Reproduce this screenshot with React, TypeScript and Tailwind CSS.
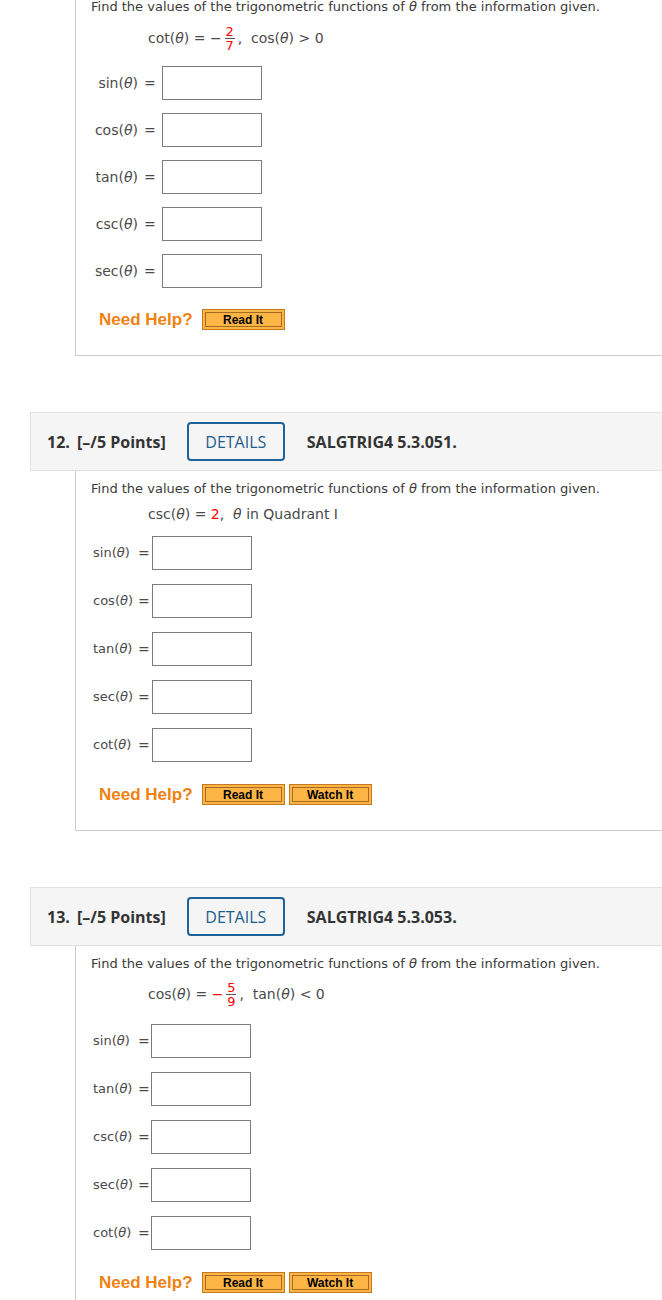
import React from 'react';

const mathFont = "font-['DejaVu_Sans',Verdana,sans-serif]";

function Theta() {
  return <i className="italic">θ</i>;
}

function Frac({ num, den }: { num: string; den: string }) {
  return (
    <span className="inline-flex flex-col items-center align-middle mx-[3px] text-[13px] leading-[11px] text-[#ff0000]">
      <span>{num}</span>
      <span className="w-[10px] h-px bg-[#555] my-[1px]" />
      <span>{den}</span>
    </span>
  );
}

function HelpButton({ label }: { label: string }) {
  return (
    <div className="w-[83px] h-[21px] border border-[#c57a22] bg-[#fdb546] p-[2px]">
      <div className="h-full border border-[#a86a20] flex items-center justify-center font-['Liberation_Sans',Arial,sans-serif] font-bold text-[12px] text-black">
        {label}
      </div>
    </div>
  );
}

function NeedHelp({ watch }: { watch?: boolean }) {
  return (
    <div className="flex items-center h-[21px] pl-[8px]">
      <span className="font-['Liberation_Sans',Arial,sans-serif] font-bold text-[17px] text-[#ef8210] mr-[9px]">
        Need Help?
      </span>
      <HelpButton label="Read It" />
      {watch && (
        <div className="ml-[4px]">
          <HelpButton label="Watch It" />
        </div>
      )}
    </div>
  );
}

function AnswerRow({
  fn,
  variant,
}: {
  fn: string;
  variant: 'right' | 'left' | 'left2';
}) {
  if (variant === 'right') {
    return (
      <div className={`flex items-center h-[34px] ${mathFont} text-[14px] text-[#4a4a4a]`}>
        <span className="w-[47px] text-right">
          {fn}(<Theta />)
        </span>
        <span className="ml-[6px]">=</span>
        <div className="ml-[6px] w-[100px] h-[34px] border border-[#7b7b7b]" />
      </div>
    );
  }
  // left-aligned labels, "=" in a fixed column
  const cols = variant === 'left' ? 'grid-cols-[47px_14px_100px]' : 'grid-cols-[47px_13px_100px]';
  return (
    <div className={`grid ${cols} items-center h-[34px] ${mathFont} text-[13px] text-[#4a4a4a]`}>
      <span className="pl-[2px] whitespace-nowrap">
        {fn}(<Theta />)
      </span>
      <span className="text-[14px]">=</span>
      <div className="w-[100px] h-[34px] border border-[#7b7b7b]" />
    </div>
  );
}

function FindText() {
  return (
    <p className={`${mathFont} text-[13px] leading-[13px] h-[13px] text-[#3a3a3a] whitespace-nowrap`}>
      Find the values of the trigonometric functions of <Theta /> from the information given.
    </p>
  );
}

function Header({ num, code }: { num: number; code: string }) {
  return (
    <div className="ml-[30px] h-[59px] border-t border-b border-l border-[#e1e1e1] bg-[#f5f5f5] flex items-center pl-[16px] font-['Open_Sans',sans-serif] text-[#333]">
      <span className="font-bold text-[16px] whitespace-nowrap">
        {num}. <span className="ml-[3px]">[–/5 Points]</span>
      </span>
      <div className="ml-[21px] w-[98px] h-[39px] border-2 border-[#1e6297] rounded-[4px] flex items-center justify-center text-[16px] text-[#1d5c8c]">
        DETAILS
      </div>
      <span className="ml-[22px] font-bold text-[16px]">{code}</span>
    </div>
  );
}

export default function App() {
  const fns1 = ['sin', 'cos', 'tan', 'csc', 'sec'];
  const fns12 = ['sin', 'cos', 'tan', 'sec', 'cot'];
  const fns13 = ['sin', 'tan', 'csc', 'sec', 'cot'];

  return (
    <div className="w-[662px] bg-white overflow-hidden pb-[6px]">
      {/* question 11 (cut off at the top) */}
      <div className="ml-[75px] border-l border-b border-[#cccccc] pl-[15px] pb-[25px]">
        <FindText />
        <div className={`mt-[13px] h-[24px] flex items-center pl-[57px] ${mathFont} text-[14px] text-[#4a4a4a] whitespace-nowrap`}>
          cot(<Theta />)&nbsp;=&nbsp;−<Frac num="2" den="7" />,&nbsp;&nbsp;cos(<Theta />)&nbsp;&gt;&nbsp;0
        </div>
        <div className="mt-[16px] flex flex-col gap-[13px]">
          {fns1.map((f) => (
            <AnswerRow key={f} fn={f} variant="right" />
          ))}
        </div>
        <div className="mt-[21px]">
          <NeedHelp />
        </div>
      </div>

      {/* question 12 */}
      <div className="mt-[56px]">
        <Header num={12} code="SALGTRIG4 5.3.051." />
        <div className="ml-[75px] border-l border-b border-[#cccccc] pl-[15px] pt-[11px] pb-[25px]">
          <FindText />
          <div className={`mt-[11px] h-[16px] flex items-center pl-[57px] ${mathFont} text-[14px] text-[#4a4a4a] whitespace-nowrap`}>
            csc(<Theta />)&nbsp;=&nbsp;<span className="text-[#ff0000]">2</span>,&nbsp;&nbsp;<Theta />&nbsp;in Quadrant I
          </div>
          <div className="mt-[14px] flex flex-col gap-[14px]">
            {fns12.map((f) => (
              <AnswerRow key={f} fn={f} variant="left" />
            ))}
          </div>
          <div className="mt-[22px]">
            <NeedHelp watch />
          </div>
        </div>
      </div>

      {/* question 13 */}
      <div className="mt-[56px]">
        <Header num={13} code="SALGTRIG4 5.3.053." />
        <div className="ml-[75px] border-l border-[#cccccc] pl-[15px] pt-[11px]">
          <FindText />
          <div className={`mt-[12px] h-[24px] flex items-center pl-[57px] ${mathFont} text-[14px] text-[#4a4a4a] whitespace-nowrap`}>
            cos(<Theta />)&nbsp;=&nbsp;<span className="text-[#ff0000]">−</span>
            <Frac num="5" den="9" />,&nbsp;&nbsp;tan(<Theta />)&nbsp;&lt;&nbsp;0
          </div>
          <div className="mt-[18px] flex flex-col gap-[14px]">
            {fns13.map((f) => (
              <AnswerRow key={f} fn={f} variant="left2" />
            ))}
          </div>
          <div className="mt-[22px] pb-[10px]">
            <NeedHelp watch />
          </div>
        </div>
      </div>
    </div>
  );
}
